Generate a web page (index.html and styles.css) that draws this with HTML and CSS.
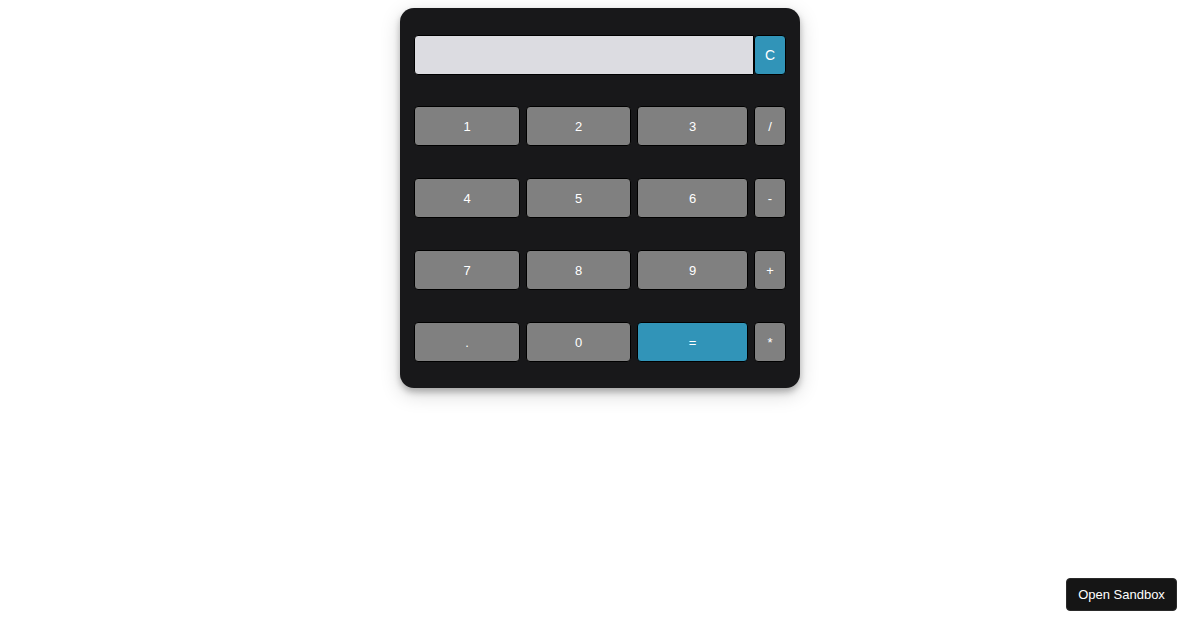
FILE: index.html
```html
<!DOCTYPE html>
<html>
<head>
<meta charset="utf-8">
<link rel="stylesheet" href="styles.css">
</head>
<body>
<div class="page">
  <div class="calc">
    <div class="row top">
      <div class="display"></div>
      <button class="key blue clear">C</button>
    </div>
    <div class="row grid">
      <button class="key">1</button><button class="key">2</button><button class="key">3</button><button class="key">/</button>
    </div>
    <div class="row grid">
      <button class="key">4</button><button class="key">5</button><button class="key">6</button><button class="key">-</button>
    </div>
    <div class="row grid">
      <button class="key">7</button><button class="key">8</button><button class="key">9</button><button class="key">+</button>
    </div>
    <div class="row grid">
      <button class="key">.</button><button class="key">0</button><button class="key blue">=</button><button class="key">*</button>
    </div>
  </div>
</div>
<button class="sandbox">Open Sandbox</button>
</body>
</html>
```

FILE: styles.css
```css
html, body {
  margin: 0;
  padding: 0;
  height: 100%;
  background: #ffffff;
  font-family: "Liberation Sans", Arial, sans-serif;
}
.page {
  display: flex;
  justify-content: center;
  align-items: flex-start;
  padding-top: 8px;
  min-height: 100%;
  box-sizing: border-box;
}
.calc {
  width: 400px;
  box-sizing: border-box;
  background: #18181a;
  border-radius: 14px;
  padding: 27px 14px 26px;
  display: flex;
  flex-direction: column;
  gap: 32px;
  box-shadow: 0 4px 6px 0 rgba(0, 0, 0, 0.25), 0 6px 20px 0 rgba(0, 0, 0, 0.17);
}
.row {
  height: 40px;
}
.top {
  display: flex;
  margin-bottom: -1px;
}
.display {
  flex: 1;
  box-sizing: border-box;
  height: 40px;
  background: #dcdce1;
  border: 1px solid #000;
  border-radius: 4px 0 0 4px;
}
.grid {
  display: grid;
  grid-template-columns: 106px 105px 111px 32px;
  column-gap: 6px;
}
.key {
  box-sizing: border-box;
  height: 40px;
  margin: 0;
  padding: 0;
  background: #808080;
  color: #ffffff;
  border: 1px solid #000;
  border-radius: 4px;
  font-family: "Liberation Sans", Arial, sans-serif;
  font-size: 13px;
}
.blue {
  background: #3194b8;
}
.clear {
  width: 32px;
  font-size: 14px;
}
.sandbox {
  position: fixed;
  right: 23px;
  bottom: 19px;
  width: 111px;
  height: 33px;
  background: #151515;
  color: #ffffff;
  border: 1px solid #2a2a2a;
  border-radius: 4px;
  font-family: "Liberation Sans", Arial, sans-serif;
  font-size: 13px;
  padding: 0;
}
```
